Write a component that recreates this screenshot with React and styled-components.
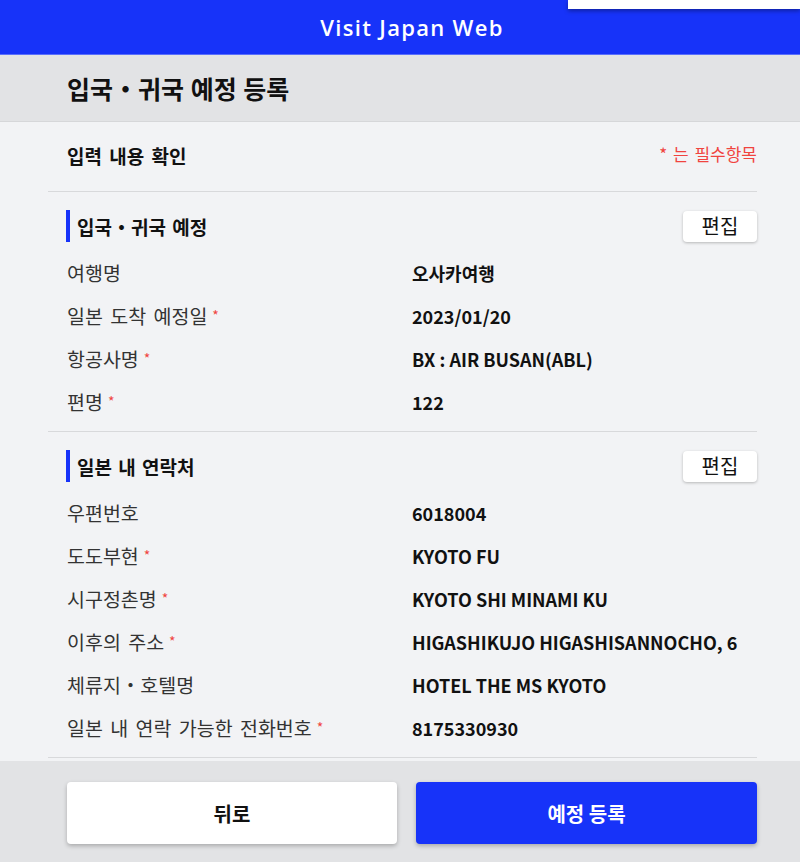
import React from "react";
import styled, { createGlobalStyle } from "styled-components";

const GlobalStyle = createGlobalStyle`
  html, body {
    margin: 0;
    padding: 0;
    background: #f2f3f5;
  }
  body {
    font-family: "Noto Sans CJK KR", "Noto Sans", sans-serif;
    color: #222;
  }
  * { box-sizing: border-box; }
`;

const schedule = [
  { label: "여행명", value: "오사카여행" },
  { label: "일본 도착 예정일", value: "2023/01/20", required: true },
  { label: "항공사명", value: "BX : AIR BUSAN(ABL)", required: true },
  { label: "편명", value: "122", required: true },
];

const contact = [
  { label: "우편번호", value: "6018004" },
  { label: "도도부현", value: "KYOTO FU", required: true },
  { label: "시구정촌명", value: "KYOTO SHI MINAMI KU", required: true },
  { label: "이후의 주소", value: "HIGASHIKUJO HIGASHISANNOCHO, 6", required: true },
  { label: "체류지・호텔명", value: "HOTEL THE MS KYOTO" },
  { label: "일본 내 연락 가능한 전화번호", value: "8175330930", required: true },
];

function Section({ title, rows }) {
  return (
    <SectionBox>
      <SectionHead>
        <SectionTitle>{title}</SectionTitle>
        <EditButton>편집</EditButton>
      </SectionHead>
      {rows.map((r) => (
        <Row key={r.label}>
          <Label>
            {r.label}
            {r.required && <Star>*</Star>}
          </Label>
          <Value>{r.value}</Value>
        </Row>
      ))}
    </SectionBox>
  );
}

export default function App() {
  return (
    <Page>
      <GlobalStyle />
      <Header>
        <Brand>Visit Japan Web</Brand>
        <Popover />
      </Header>
      <TitleBand>
        <PageTitle>입국・귀국 예정 등록</PageTitle>
      </TitleBand>
      <Content>
        <ConfirmBar>
          <ConfirmTitle>입력 내용 확인</ConfirmTitle>
          <RequiredNote>* 는 필수항목</RequiredNote>
        </ConfirmBar>
        <Section title="입국・귀국 예정" rows={schedule} />
        <Section title="일본 내 연락처" rows={contact} />
      </Content>
      <Footer>
        <BackButton>뒤로</BackButton>
        <SubmitButton>예정 등록</SubmitButton>
      </Footer>
    </Page>
  );
}

const Page = styled.div`
  width: 800px;
  min-height: 862px;
  display: flex;
  flex-direction: column;
  background: #f2f3f5;
  overflow: hidden;
`;

const Header = styled.header`
  position: relative;
  height: 55px;
  background: #1733f9;
  border-bottom: 1px solid #5a6ffb;
  display: flex;
  align-items: center;
  justify-content: center;
  padding-left: 24px;
`;

const Brand = styled.h1`
  margin: 0;
  color: #fff;
  font-family: "Open Sans", "Noto Sans", sans-serif;
  font-size: 22px;
  font-weight: 600;
  letter-spacing: 1.3px;
`;

const Popover = styled.div`
  position: absolute;
  top: 0;
  right: 0;
  width: 232px;
  height: 9px;
  background: #fff;
  box-shadow: 0 2px 4px rgba(0, 0, 0, 0.35);
`;

const TitleBand = styled.div`
  height: 67px;
  background: #e2e3e5;
  border-bottom: 1px solid #d6d7d9;
  display: flex;
  align-items: center;
  padding-left: 67px;
`;

const PageTitle = styled.h2`
  margin: 0;
  font-size: 25px;
  font-weight: 700;
  color: #111;
  word-spacing: 1px;
`;

const Content = styled.main`
  padding: 0 43px 0 48px;
`;

const ConfirmBar = styled.div`
  height: 70px;
  display: flex;
  align-items: center;
  justify-content: space-between;
  padding-left: 19px;
  border-bottom: 1px solid #d8d9db;
`;

const ConfirmTitle = styled.div`
  font-size: 19px;
  font-weight: 700;
  color: #111;
  word-spacing: 3px;
  margin-top: -2px;
`;

const RequiredNote = styled.div`
  font-size: 17px;
  color: #f0443f;
  margin-top: -6px;
  word-spacing: 2px;
`;

const SectionBox = styled.section`
  padding: 18px 0 8px 19px;
  border-bottom: 1px solid #d8d9db;
`;

const SectionHead = styled.div`
  display: flex;
  align-items: center;
  justify-content: space-between;
  height: 32px;
  margin-bottom: 9px;
`;

const SectionTitle = styled.h3`
  margin: 0;
  height: 32px;
  display: flex;
  align-items: center;
  border-left: 4px solid #1733f9;
  padding-left: 7px;
  margin-left: -1px;
  font-size: 19px;
  font-weight: 700;
  color: #111;
  word-spacing: 2px;
`;

const EditButton = styled.button`
  width: 74px;
  height: 31px;
  border: none;
  border-radius: 4px;
  background: #fff;
  box-shadow: 0 1px 3px rgba(0, 0, 0, 0.25);
  font-family: inherit;
  font-size: 20px;
  line-height: 1;
  color: #111;
`;

const Row = styled.div`
  height: 43px;
  display: grid;
  grid-template-columns: 345px 1fr;
  align-items: center;
`;

const Label = styled.div`
  font-size: 19.5px;
  color: #333;
  word-spacing: 3px;
`;

const Star = styled.span`
  color: #f0443f;
  font-size: 14px;
  margin-left: 5px;
  vertical-align: 3px;
`;

const Value = styled.div`
  font-size: 18px;
  font-weight: 700;
  color: #111;
  white-space: nowrap;
`;

const Footer = styled.footer`
  margin-top: 3px;
  flex: 1;
  background: #e2e3e5;
  display: grid;
  grid-template-columns: 330px 341px;
  gap: 19px;
  padding: 21px 43px 0 67px;
  align-items: start;
`;

const BaseButton = styled.button`
  height: 62px;
  border: none;
  border-radius: 4px;
  font-family: inherit;
  font-size: 20px;
  font-weight: 700;
  box-shadow: 0 2px 4px rgba(0, 0, 0, 0.25);
`;

const BackButton = styled(BaseButton)`
  background: #fff;
  color: #111;
`;

const SubmitButton = styled(BaseButton)`
  background: #1733f9;
  color: #fff;
`;
